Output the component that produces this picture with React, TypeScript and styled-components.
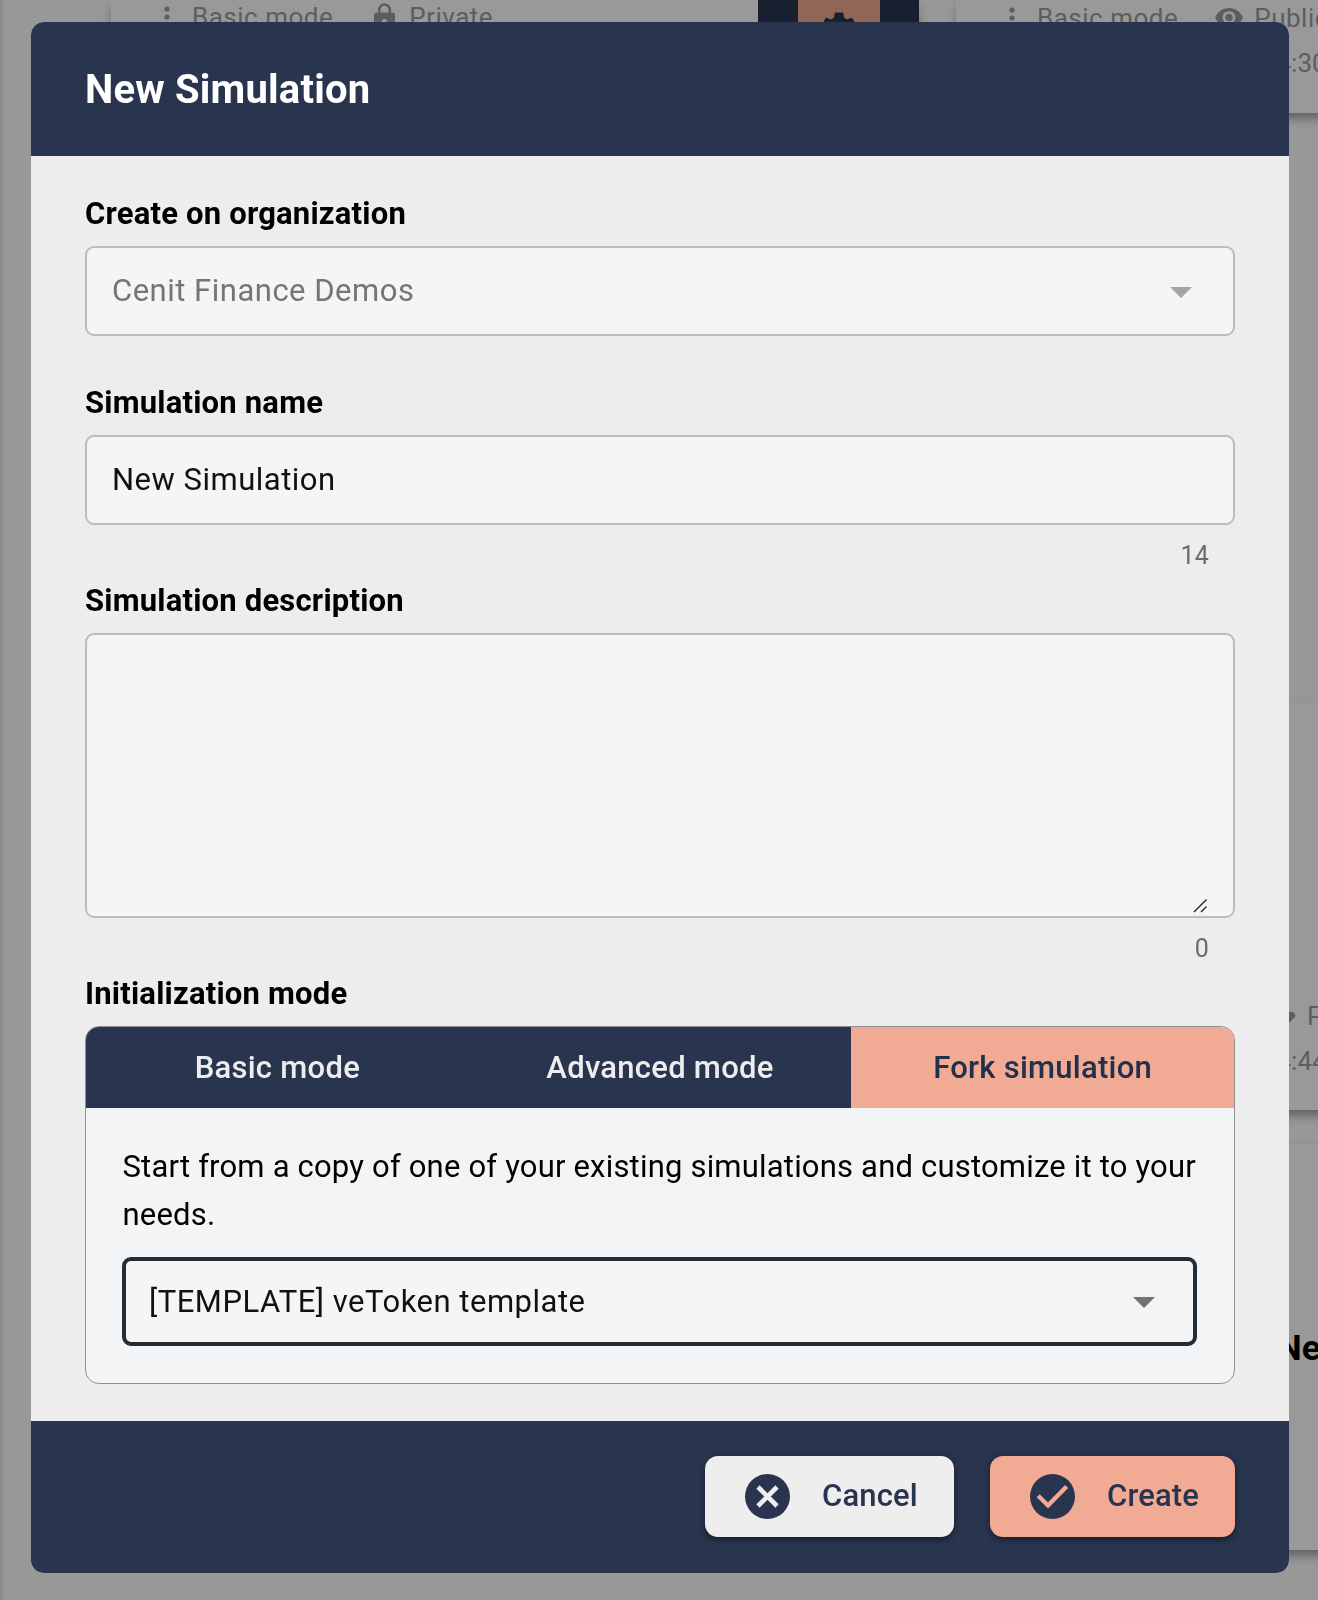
import React from "react";
import styled, { createGlobalStyle, css } from "styled-components";

const navy = "#29344e";
const peach = "#f1aa94";

const GlobalStyle = createGlobalStyle`
  * { box-sizing: border-box; }
  body {
    margin: 0;
    overflow: hidden;
    font-family: Roboto, "Liberation Sans", sans-serif;
    font-size: 31px;
    color: #000;
  }
`;

/* ---------- page behind the dialog ---------- */

const Page = styled.div`
  display: flex;
  width: 1318px;
  height: 1600px;
  overflow: hidden;
  background: #fdfdfd;
`;

const Rail = styled.div`
  flex: 0 0 3px;
  margin-right: 108px;
  background: #ececec;
`;

const Column = styled.div`
  flex: 0 0 808px;
  display: flex;
  flex-direction: column;
  margin-right: 37px;
`;

const Card = styled.article<{ $height: number; $after?: number }>`
  display: flex;
  flex: 0 0 ${(p) => p.$height}px;
  margin-bottom: ${(p) => p.$after ?? 0}px;
  background: #fff;
  box-shadow: 0 8px 10px -3px rgba(0, 0, 0, 0.3), 0 4px 10px rgba(0, 0, 0, 0.12);
`;

const CardInfo = styled.div<{ $top: number; $left: number }>`
  flex: 1;
  display: flex;
  flex-direction: column;
  gap: 15px;
  padding: ${(p) => p.$top}px 0 0 ${(p) => p.$left}px;
  font-size: 26px;
  line-height: 30px;
  color: #9c9c9c;
  white-space: nowrap;
`;

const Meta = styled.div`
  display: flex;
  align-items: center;
  height: 30px;

  svg { flex: none; fill: currentColor; }
`;

const MetaText = styled.span<{ $before: number; $after?: number }>`
  margin-left: ${(p) => p.$before}px;
  margin-right: ${(p) => p.$after ?? 0}px;
  letter-spacing: 0.5px;
`;

const Time = styled.div<{ $left: number }>`
  padding-left: ${(p) => p.$left}px;
`;

const CardSide = styled.div`
  flex: 0 0 161px;
  display: flex;
  justify-content: center;
  align-items: flex-start;
  background: ${navy};
`;

const GearButton = styled.div`
  width: 82px;
  height: 60px;
  display: flex;
  justify-content: center;
  padding-top: 8px;
  background: ${peach};
  color: ${navy};

  svg { fill: currentColor; }
`;

const CardTitle = styled.h3`
  margin: 0;
  padding: 185px 0 0 321px;
  font-size: 35px;
  line-height: 40px;
  font-weight: 700;
`;

/* ---------- dialog ---------- */

const Scrim = styled.div`
  position: fixed;
  inset: 0;
  display: flex;
  align-items: flex-start;
  padding: 22px 29px 0 31px;
  background: rgba(0, 0, 0, 0.4);
`;

const Dialog = styled.section`
  flex: 1;
  display: flex;
  flex-direction: column;
  border-radius: 13px;
  overflow: hidden;
  background: #ededed;
`;

const Header = styled.header`
  height: 134px;
  display: flex;
  align-items: center;
  padding: 1px 0 0 54px;
  background: ${navy};
`;

const Title = styled.h2`
  margin: 0;
  font-size: 40px;
  line-height: 50px;
  font-weight: 700;
  letter-spacing: 0.2px;
  color: #fff;
`;

const Body = styled.div`
  display: flex;
  flex-direction: column;
  padding: 40px 54px 37px;
`;

const Label = styled.label`
  height: 36px;
  margin-bottom: 14px;
  line-height: 36px;
  font-weight: 700;
  letter-spacing: 0.2px;
`;

const Field = styled.div<{ $disabled?: boolean; $focused?: boolean }>`
  display: flex;
  align-items: center;
  justify-content: space-between;
  height: ${(p) => (p.$focused ? 89 : 90)}px;
  border-radius: 9px;
  background: #f5f5f5;
  letter-spacing: 0.5px;
  ${(p) =>
    p.$focused
      ? css`
          border: 4px solid #222d35;
          padding: 0 38px 1px 23px;
        `
      : css`
          border: 2px solid #bcbcbc;
          padding: 0 41px 2px 25px;
        `}
  color: ${(p) => (p.$disabled ? "#757575" : "#111")};

  svg {
    flex: none;
    margin-top: ${(p) => (p.$focused ? 3 : 5)}px;
    fill: ${(p) => (p.$disabled ? "#a5a5a5" : "#727272")};
  }
`;

const TextArea = styled(Field)`
  height: 285px;
  align-items: flex-end;
  justify-content: flex-end;
  padding: 0 26px 3px;

  svg { fill: none; stroke: #222; }
`;

const Gap = styled.div`
  height: 49px;
`;

const Counter = styled.div`
  height: 58px;
  padding: 13px 26px 0 0;
  line-height: 35px;
  font-size: 25px;
  letter-spacing: 0.2px;
  text-align: right;
  color: #6c6c6c;
`;

const ModePanel = styled.div`
  border: 1.5px solid #909090;
  border-radius: 14px;
  overflow: hidden;
  background: #f3f4f6;
`;

const Tabs = styled.div`
  display: grid;
  grid-template-columns: repeat(3, 1fr);
  height: 81px;
`;

const Tab = styled.div<{ $active?: boolean }>`
  display: flex;
  align-items: center;
  justify-content: center;
  padding-bottom: 1px;
  font-weight: 500;
  letter-spacing: 0.27px;
  background: ${(p) => (p.$active ? peach : navy)};
  color: ${(p) => (p.$active ? "#22304c" : "#ededed")};
`;

const ModeContent = styled.div`
  padding: 35px 37px 37px 36px;
`;

const Hint = styled.p`
  margin: 0 -6px 18px 0.5px;
  line-height: 48px;
  letter-spacing: 0.19px;
`;

const Footer = styled.footer`
  height: 152px;
  display: flex;
  justify-content: flex-end;
  gap: 36px;
  padding: 35px 54px 0;
  background: ${navy};
`;

const Button = styled.button<{ $primary?: boolean }>`
  display: flex;
  align-items: center;
  width: ${(p) => (p.$primary ? 245 : 249)}px;
  height: 81px;
  padding: 0 0 0 40px;
  border: 0;
  border-radius: 13px;
  background: ${(p) => (p.$primary ? peach : "#eee")};
  box-shadow: 0 3px 5px rgba(0, 0, 0, 0.3), 0 1px 8px rgba(0, 0, 0, 0.2);
  font: 500 31px Roboto, "Liberation Sans", sans-serif;
  letter-spacing: 0.15px;
  color: ${navy};

  svg {
    flex: none;
    margin-right: 32px;
    stroke: ${(p) => (p.$primary ? peach : "#eee")};
  }
`;

const ButtonText = styled.span`
  padding-bottom: 2px;
`;

const Arrow = () => (
  <svg width="22" height="11" viewBox="0 0 22 11">
    <path d="M0 0H22L11 11Z" />
  </svg>
);

const Dots = () => (
  <svg width="6" height="24" viewBox="0 0 6 24">
    <circle cx="3" cy="4" r="2.6" />
    <circle cx="3" cy="12" r="2.6" />
    <circle cx="3" cy="20" r="2.6" />
  </svg>
);

const Lock = () => (
  <svg width="21" height="28" viewBox="4 1 16 21">
    <path d="M18 8h-1V6c0-2.76-2.24-5-5-5S7 3.24 7 6v2H6c-1.1 0-2 .9-2 2v10c0 1.1.9 2 2 2h12c1.1 0 2-.9 2-2V10c0-1.1-.9-2-2-2zm-6 9c-1.1 0-2-.9-2-2s.9-2 2-2 2 .9 2 2-.9 2-2 2zm3.1-9H8.9V6c0-1.71 1.39-3.1 3.1-3.1 1.71 0 3.1 1.39 3.1 3.1v2z" />
  </svg>
);

const Eye = () => (
  <svg width="28" height="19" viewBox="1 4.5 22 15">
    <path d="M12 4.5C7 4.5 2.73 7.61 1 12c1.73 4.39 6 7.5 11 7.5s9.27-3.11 11-7.5c-1.73-4.39-6-7.5-11-7.5zM12 17c-2.76 0-5-2.24-5-5s2.24-5 5-5 5 2.24 5 5-2.24 5-5 5zm0-8c-1.66 0-3 1.34-3 3s1.34 3 3 3 3-1.34 3-3-1.34-3-3-3z" />
  </svg>
);

const Handshake = () => (
  <svg width="28" height="22" viewBox="0 0 28 22">
    <path d="M0 12L8 5h5l3 1 3 1h5.500q.6 0 1 .6l1.800 2.400q.5 .8-.1 1.500L22.500 16.500l-6 3.500h-4Z" />
  </svg>
);

const Gear = () => (
  <svg width="44" height="44" viewBox="0 0 24 24">
    <path d="M19.14 12.94c.04-.3.06-.61.06-.94 0-.32-.02-.64-.07-.94l2.03-1.58c.18-.14.23-.41.12-.61l-1.92-3.32c-.12-.22-.37-.29-.59-.22l-2.39.96c-.5-.38-1.03-.7-1.62-.94l-.36-2.54c-.04-.24-.24-.41-.48-.41h-3.84c-.24 0-.43.17-.47.41l-.36 2.54c-.59.24-1.13.57-1.62.94l-2.39-.96c-.22-.08-.47 0-.59.22L2.74 8.87c-.12.21-.08.47.12.61l2.03 1.58c-.05.3-.09.63-.09.94s.02.64.07.94l-2.03 1.58c-.18.14-.23.41-.12.61l1.92 3.32c.12.22.37.29.59.22l2.39-.96c.5.38 1.03.7 1.62.94l.36 2.54c.05.24.24.41.48.41h3.84c.24 0 .44-.17.47-.41l.36-2.54c.59-.24 1.13-.56 1.62-.94l2.39.96c.22.08.47 0 .59-.22l1.92-3.32c.12-.22.07-.47-.12-.61l-2.01-1.58zM12 15.6c-1.98 0-3.6-1.62-3.6-3.6s1.62-3.6 3.6-3.6 3.6 1.62 3.6 3.6-1.62 3.6-3.6 3.6z" />
  </svg>
);

const CloseIcon = () => (
  <svg width="45" height="45" viewBox="0 0 45 45">
    <circle cx="22.5" cy="22.5" r="22.5" fill={navy} stroke="none" />
    <path d="M13 13L32 32M32 13L13 32" strokeWidth="4.6" />
  </svg>
);

const CheckIcon = () => (
  <svg width="45" height="45" viewBox="0 0 45 45">
    <circle cx="22.5" cy="22.5" r="22.5" fill={navy} stroke="none" />
    <path d="M8.2 21.8L18 31.5L36.6 12.5" fill="none" strokeWidth="4.4" />
  </svg>
);

export default function App() {
  return (
    <>
      <GlobalStyle />
      <Page>
        <Rail />
        <Column>
          <Card $height={113}>
            <CardInfo $top={2} $left={53}>
              <Meta>
                <Dots />
                <MetaText $before={22} $after={41}>Basic mode</MetaText>
                <Lock />
                <MetaText $before={14}>Private</MetaText>
              </Meta>
            </CardInfo>
            <CardSide>
              <GearButton>
                <Gear />
              </GearButton>
            </CardSide>
          </Card>
        </Column>
        <Column>
          <Card $height={113} $after={590}>
            <CardInfo $top={2.5} $left={53}>
              <Meta>
                <Dots />
                <MetaText $before={22} $after={37}>Basic mode</MetaText>
                <Eye />
                <MetaText $before={11}>Public</MetaText>
              </Meta>
              <Time $left={267.5}>4:30</Time>
            </CardInfo>
          </Card>
          <Card $height={407} $after={34}>
            <CardInfo $top={297.5} $left={312}>
              <Meta>
                <Handshake />
                <MetaText $before={11}>Public</MetaText>
              </Meta>
              <Time $left={8.5}>4:44</Time>
            </CardInfo>
          </Card>
          <Card $height={406}>
            <CardTitle>New</CardTitle>
          </Card>
        </Column>
      </Page>

      <Scrim>
        <Dialog>
          <Header>
            <Title>New Simulation</Title>
          </Header>
          <Body>
            <Label>Create on organization</Label>
            <Field $disabled>
              Cenit Finance Demos
              <Arrow />
            </Field>
            <Gap />
            <Label>Simulation name</Label>
            <Field>New Simulation</Field>
            <Counter>14</Counter>
            <Label>Simulation description</Label>
            <TextArea>
              <svg width="14" height="14" viewBox="0 0 14 14">
                <path d="M1 13L13.5 0.5M8 13L13.5 7.5" strokeWidth="1.4" />
              </svg>
            </TextArea>
            <Counter>0</Counter>
            <Label>Initialization mode</Label>
            <ModePanel>
              <Tabs>
                <Tab>Basic mode</Tab>
                <Tab>Advanced mode</Tab>
                <Tab $active>Fork simulation</Tab>
              </Tabs>
              <ModeContent>
                <Hint>
                  Start from a copy of one of your existing simulations and customize it to your
                  needs.
                </Hint>
                <Field $focused>
                  [TEMPLATE] veToken template
                  <Arrow />
                </Field>
              </ModeContent>
            </ModePanel>
          </Body>
          <Footer>
            <Button>
              <CloseIcon />
              <ButtonText>Cancel</ButtonText>
            </Button>
            <Button $primary>
              <CheckIcon />
              <ButtonText>Create</ButtonText>
            </Button>
          </Footer>
        </Dialog>
      </Scrim>
    </>
  );
}
